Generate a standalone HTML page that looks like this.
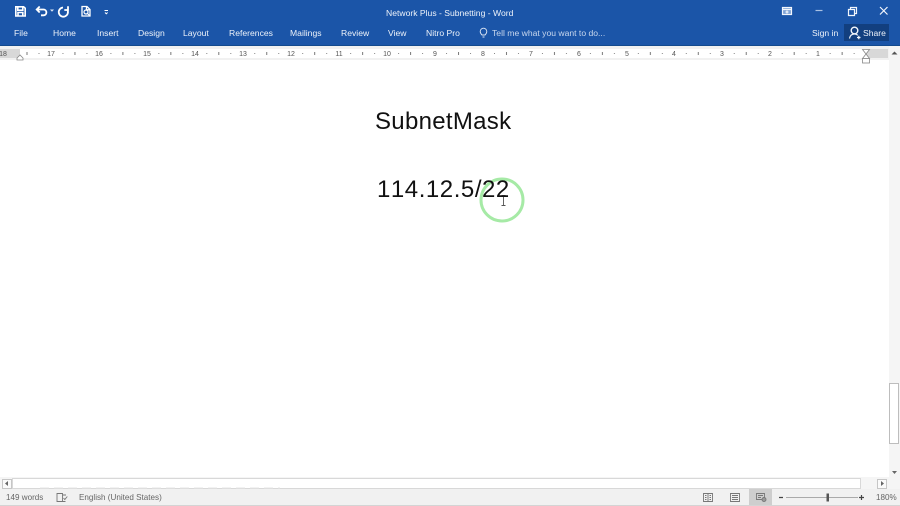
<!DOCTYPE html>
<html><head><meta charset="utf-8"><style>
html,body{margin:0;padding:0;background:#fff}
#p{position:relative;width:900px;height:506px;overflow:hidden;background:#fff;font-family:"Liberation Sans",sans-serif;filter:blur(.35px)}
.a{position:absolute;white-space:nowrap}
.t{color:#eef3fa;font-size:8.6px;line-height:12px;top:27px}
.s{color:#666;font-size:8.1px;line-height:12px;top:492px}
svg{position:absolute;left:0;top:0}
</style></head><body><div id="p">
<div class="a" style="left:0;top:0;width:900px;height:46px;background:#1b55a8"></div>
<div class="a" style="left:0;top:45px;width:900px;height:1px;background:#134a8e"></div>
<div class="a" style="left:0;top:46px;width:900px;height:14px;background:#f1f1f1"></div>
<div class="a" style="left:0;top:49px;width:888px;height:9px;background:#fff"></div>
<div class="a" style="left:0;top:49px;width:20px;height:9px;background:#d8d8d8"></div>
<div class="a" style="left:866px;top:49px;width:22px;height:9px;background:#d8d8d8"></div>
<div class="a" style="left:889px;top:46px;width:11px;height:443px;background:#f5f5f5"></div>
<div class="a" style="left:889px;top:383px;width:10px;height:61px;box-sizing:border-box;border:1px solid #bdbdbd;background:#fff"></div>
<div class="a" style="left:0;top:477px;width:889px;height:12px;background:#f5f5f5"></div>
<div class="a" style="left:12px;top:478px;width:849px;height:11px;box-sizing:border-box;border:1px solid #d8d8d8;background:#fff"></div>
<div class="a" style="left:2px;top:479px;width:10px;height:10px;box-sizing:border-box;border:1px solid #c6c6c6;background:#fafafa"></div>
<div class="a" style="left:877px;top:479px;width:10px;height:10px;box-sizing:border-box;border:1px solid #c6c6c6;background:#fafafa"></div>
<div class="a" style="left:0;top:489px;width:900px;height:17px;background:#f1f1f1"></div>
<div class="a" style="left:749px;top:489px;width:23px;height:16px;background:#cecece"></div>
<div class="a" style="left:0;top:505px;width:900px;height:1px;background:#d4d4d4"></div>

<div class="a" style="left:386px;top:7px;color:#eef3fa;font-size:8.6px;line-height:12px">Network Plus - Subnetting - Word</div>
<div class="a t" style="left:14px">File</div>
<div class="a t" style="left:53px">Home</div>
<div class="a t" style="left:97px">Insert</div>
<div class="a t" style="left:138px">Design</div>
<div class="a t" style="left:183px">Layout</div>
<div class="a t" style="left:229px">References</div>
<div class="a t" style="left:290px">Mailings</div>
<div class="a t" style="left:341px">Review</div>
<div class="a t" style="left:388px">View</div>
<div class="a t" style="left:426px">Nitro Pro</div>
<div class="a t" style="left:492px;color:#c9d8ee">Tell me what you want to do...</div>
<div class="a t" style="left:812px">Sign in</div>
<div class="a" style="left:844px;top:24px;width:45px;height:17px;background:#123f7f"></div>
<div class="a t" style="left:863px">Share</div>

<svg width="900" height="506" viewBox="0 0 900 506" fill="none">
<g stroke="#fff" stroke-width="1.600">
<path d="M15.800 6.800h7.800l1.600 1.400v7.800h-9.400z"/>
<path d="M17.800 7v3.200h5V7M18 16v-3.500h4.800V16"/>
<path d="M37 9.500h6.500a2.800 2.800 0 0 1 0 5.800h-2.500M39.700 6.500l-3 3 3 3" stroke-width="1.800"/>
<path d="M63 7.500a4.600 4.600 0 1 0 4.300 2.200M68 6.300v3.700h-3.700" stroke-width="1.800"/>
<path d="M82 6.500h5l3 3v6.500h-8zM86.500 6.800v3h3" stroke-width="1.300"/>
<circle cx="86" cy="12" r="2" stroke-width="1.200"/><path d="M87.500 13.500l2.500 2.500" stroke-width="1.200"/>
<path d="M104.500 10.500h3.500M105 12.500l1.300 1.300 1.300-1.300" stroke-width="1"/>
</g>
<path d="M50 9.500h4l-2 2.200z" fill="#dce6f4"/>
<g stroke="#f2f6fc" stroke-width="1.200">
<rect x="782.500" y="7.500" width="9" height="7" fill="#7fa3d6"/><path d="M782.500 9.500h9M787 10.500v3M785.500 12h3"/>
<path d="M815.500 10.500h7" stroke="#a9c1e3"/>
<path d="M848.500 9.500h6v6h-6zM850.500 9.500v-2h6v6h-2"/>
<path d="M880 7l7.500 7.500M887.500 7L880 14.500"/>
<circle cx="854.500" cy="30.500" r="3.300" stroke-width="1.400"/>
<path d="M849.500 38.500c.5-3 2.500-4.500 5-4.500 1.500 0 2.500.5 3.300 1.300M857 37.500h3.500M858.800 35.800v3.500"/>
</g>
<g stroke="#dfe8f5" stroke-width=".9">
<path d="M482 35c-1-1-1.800-2-1.800-3.500a3.300 3.300 0 0 1 6.600 0c0 1.500-.8 2.500-1.800 3.500zM482.500 37h2"/>
</g>

<g font-family="Liberation Sans,sans-serif" font-size="7" fill="#555" text-anchor="middle">
<text x="3" y="56">18</text><text x="51" y="56">17</text><text x="99" y="56">16</text><text x="147" y="56">15</text><text x="195" y="56">14</text><text x="243" y="56">13</text><text x="291" y="56">12</text><text x="339" y="56">11</text><text x="387" y="56">10</text><text x="435" y="56">9</text><text x="483" y="56">8</text><text x="531" y="56">7</text><text x="579" y="56">6</text><text x="627" y="56">5</text><text x="674" y="56">4</text><text x="722" y="56">3</text><text x="770" y="56">2</text><text x="818" y="56">1</text>
</g>
<defs><pattern id="r" x="3" y="49" width="47.950" height="9" patternUnits="userSpaceOnUse">
<rect x="11.500" y="4" width="1" height="1" fill="#888"/><rect x="23.500" y="3" width="1" height="3" fill="#777"/><rect x="35.500" y="4" width="1" height="1" fill="#888"/>
</pattern></defs>
<rect x="20" y="49" width="846" height="9" fill="url(#r)"/>
<path d="M17 58l3-3 3 3v2h-6z" fill="#fff" stroke="#888" stroke-width=".8"/>
<path d="M862.500 49.500h7l-3.500 4.500 3.500 4.500h-7l3.500-4.500z" fill="#fff" stroke="#888" stroke-width=".8"/>
<rect x="862.500" y="58.500" width="7" height="4.500" fill="#fff" stroke="#888" stroke-width=".8"/>
<path d="M891.500 54.500h6l-3-3z" fill="#555"/>
<path d="M892 471h5l-2.500 3z" fill="#666"/>
<path d="M8 481v5l-3-2.500zM881 481v5l3-2.500z" fill="#666"/>
<path d="M40 488h240" stroke="#e4e4e4" stroke-width="1" stroke-dasharray="9 5"/>

<circle cx="502" cy="200" r="21" stroke="#a6eaa6" stroke-width="3"/>
<path d="M501.500 195.500h4M501.500 205.500h4M503.500 195.500v10" stroke="#555" stroke-width=".9"/>

<g stroke="#777" stroke-width=".9">
<path d="M57 493.500h5.500v8h-5.500zM62.500 495h3.500M62.500 501.500h3M63.500 498l1.300 1.500 2.500-3"/>
<path d="M703.500 493.500h4.500v8h-4.500zM708 493.500h4.500v8H708zM705 495.500h1.500M705 497.500h1.500M705 499.500h1.500M709.500 495.500h1.500M709.500 497.500h1.500M709.500 499.500h1.500"/>
<path d="M730.500 493.500h9v8h-9zM732 495.500h6M732 497.500h6M732 499.500h6"/>
<path d="M756.500 493.500h8v6h-8zM758 495.500h5M758 497.500h3"/>
<circle cx="764" cy="499.500" r="2" fill="#999"/>
<path d="M786 497.500h72" stroke="#aaa"/>
<path d="M779 497.500h4M859 497.500h5M861.500 495v5" stroke="#444" stroke-width="1.200"/>
</g>
<rect x="826.500" y="493.500" width="2.500" height="8" fill="#555"/>
</svg>

<div class="a" style="left:375px;top:107px;font-size:24px;line-height:30px;letter-spacing:.3px;color:#111">SubnetMask</div>
<div class="a" style="left:377px;top:175px;font-size:24px;line-height:30px;letter-spacing:.55px;font-kerning:none;color:#111">114.12.5/22</div>

<div class="a s" style="left:6px">149 words</div>
<div class="a s" style="left:79px">English (United States)</div>
<div class="a s" style="left:876px">180%</div>
</div></body></html>
